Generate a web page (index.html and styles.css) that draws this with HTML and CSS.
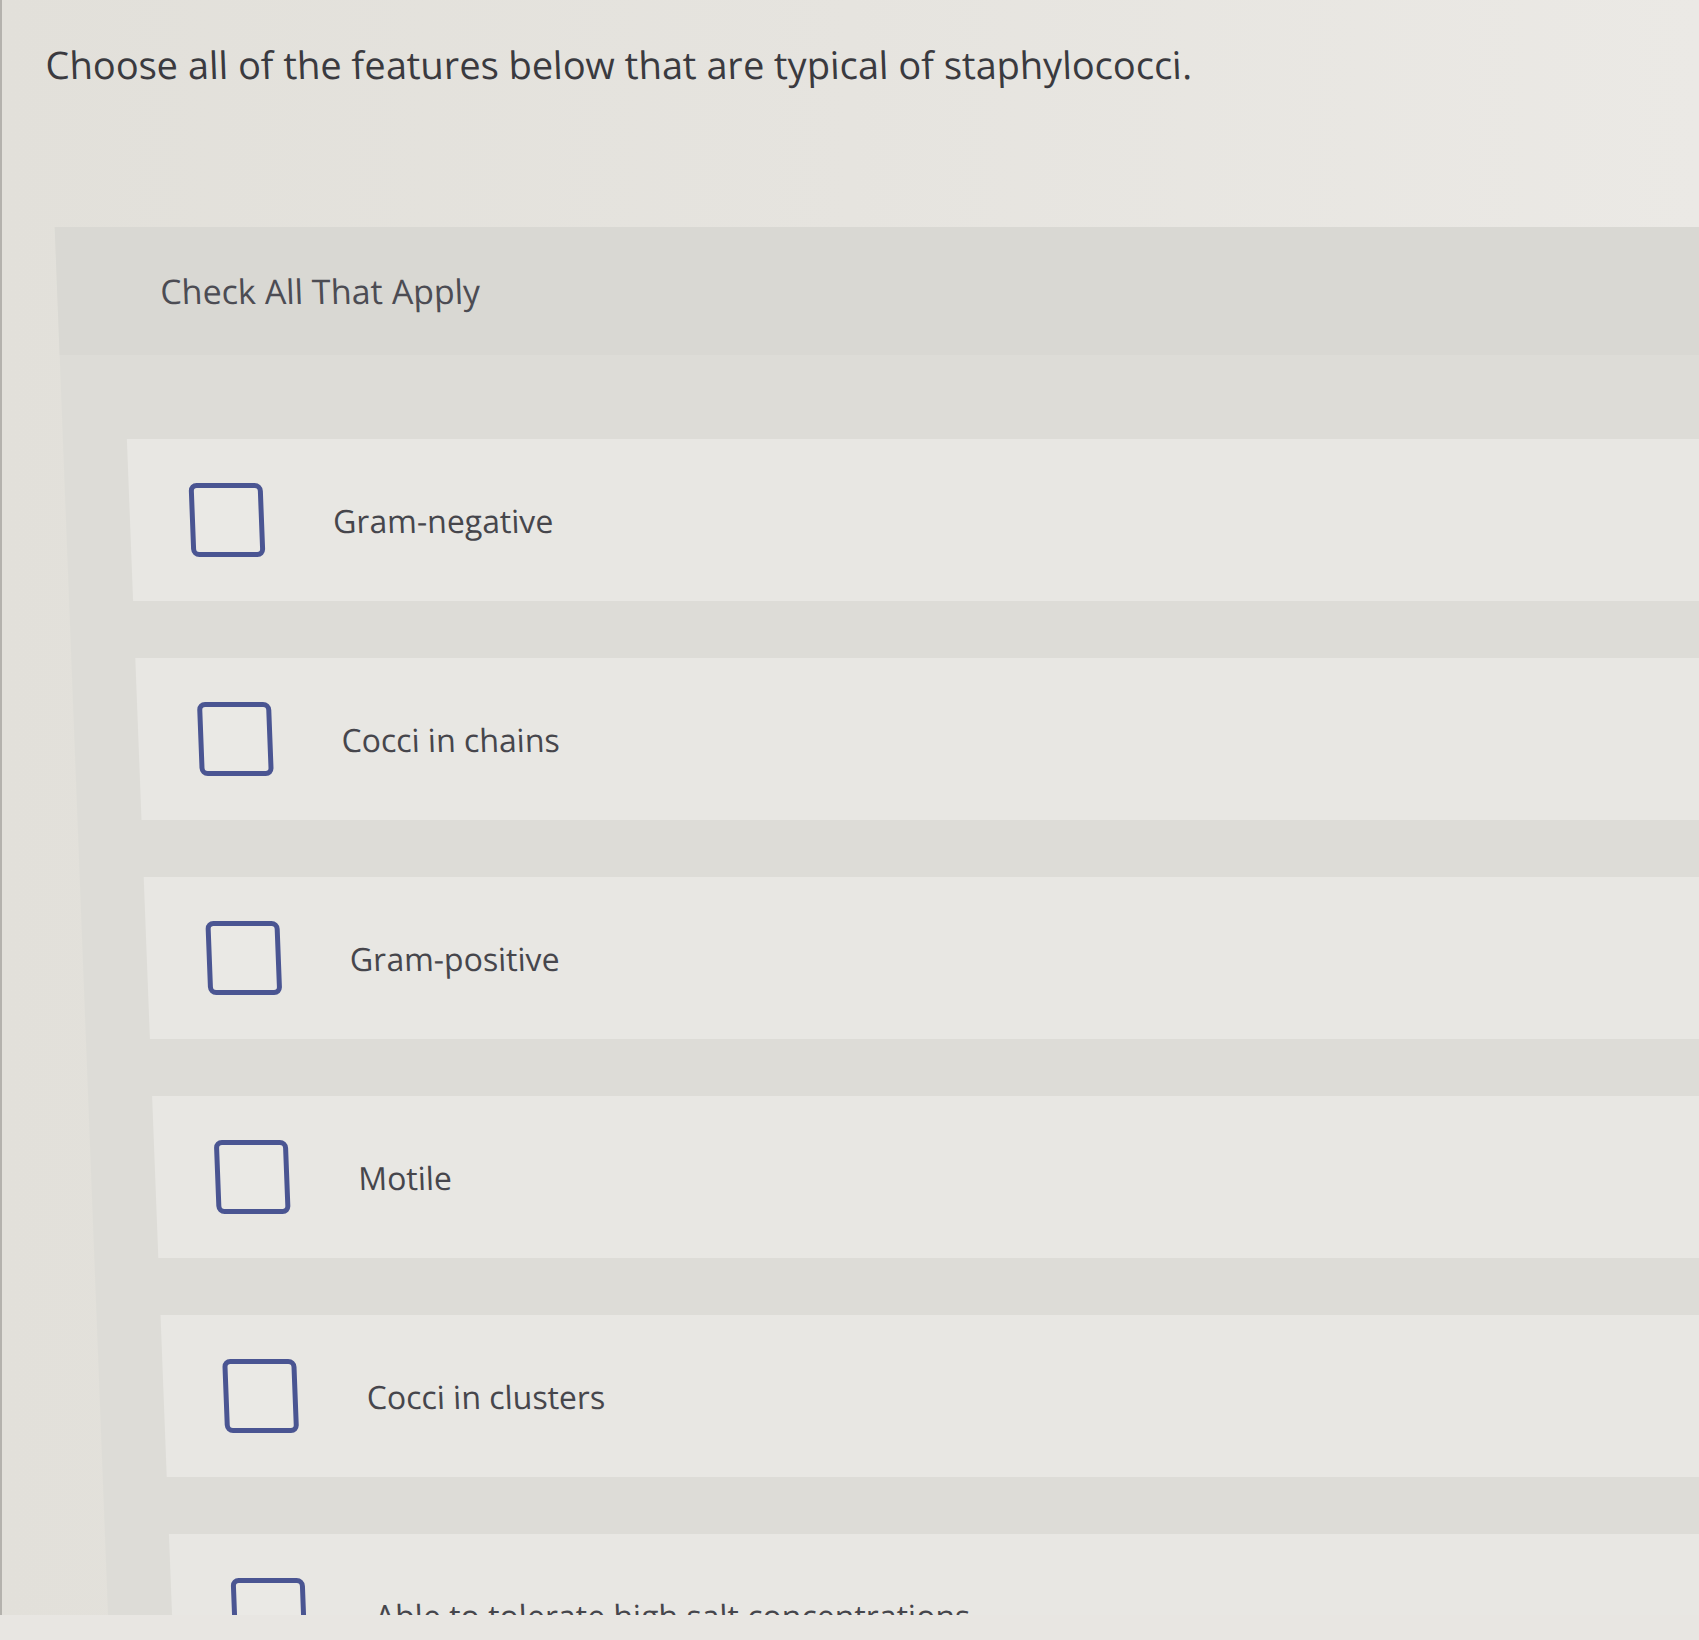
FILE: index.html
```html
<!DOCTYPE html>
<html lang="en">
<head>
<meta charset="utf-8">
<title>Check All That Apply</title>
<link rel="stylesheet" href="styles.css">
</head>
<body>
<div class="screen">
  <div class="sheet">
    <h1 class="prompt">Choose all of the features below that are typical of staphylococci.</h1>
    <section class="panel">
      <div class="panel-head">Check All That Apply</div>
      <ul class="options">
        <li class="option"><span class="box"></span><span class="label">Gram-negative</span></li>
        <li class="option"><span class="box"></span><span class="label">Cocci in chains</span></li>
        <li class="option"><span class="box"></span><span class="label">Gram-positive</span></li>
        <li class="option"><span class="box"></span><span class="label">Motile</span></li>
        <li class="option"><span class="box"></span><span class="label">Cocci in clusters</span></li>
        <li class="option"><span class="box"></span><span class="label">Able to tolerate high salt concentrations</span></li>
      </ul>
    </section>
  </div>
</div>
</body>
</html>
```
FILE: styles.css
```css
html, body {
  margin: 0;
  padding: 0;
}
body {
  background: #e8e6e2;
  font-family: "Open Sans", "Liberation Sans", sans-serif;
  width: 1699px;
  height: 1640px;
  overflow: hidden;
}
.screen {
  height: 1615px;
  overflow: hidden;
  background: linear-gradient(90deg, #e2e0da 0%, #e6e4df 50%, #ebe9e5 100%);
  border-left: 2px solid #b4b2ad;
  box-sizing: border-box;
}
.sheet {
  transform: skewX(2.2deg);
  transform-origin: 0 0;
  padding-top: 39px;
}
.prompt {
  margin: 0 0 138px 41px;
  font-size: 38px;
  line-height: 50px;
  font-weight: 500;
  color: #3a3a3f;
  white-space: nowrap;
}
.panel {
  margin-left: 44px;
  background: #dddcd7;
}
.panel-head {
  height: 128px;
  display: flex;
  align-items: center;
  padding-left: 103px;
  background: #d9d8d3;
  font-size: 34px;
  font-weight: 500;
  color: #4c4c53;
}
.options {
  list-style: none;
  margin: 0;
  padding: 84px 0 40px 64px;
  display: flex;
  flex-direction: column;
  gap: 57px;
}
.option {
  height: 162px;
  display: flex;
  align-items: center;
  padding-left: 60px;
  background: #e8e7e3;
}
.box {
  flex: none;
  width: 74px;
  height: 74px;
  box-sizing: border-box;
  border: 5px solid #4a5592;
  border-radius: 8px;
  background: #eae9e5;
}
.label {
  margin-left: 69px;
  font-size: 32px;
  font-weight: 500;
  color: #46464c;
  white-space: nowrap;
}
```
